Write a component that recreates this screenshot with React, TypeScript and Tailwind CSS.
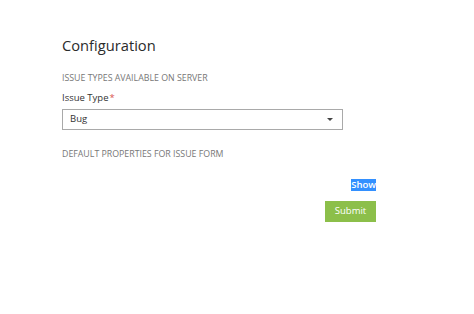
export default function App() {
  return (
    <div className="h-[314px] w-[474px] bg-white font-['Open_Sans',sans-serif]">
      <div className="w-[376px] pl-[62px] pt-[34px]">
        <h1 className="text-[14.7px] leading-[22px] text-[#2b2b2b]">Configuration</h1>
        <div className="mt-[16px] text-[8.8px] leading-[12px] text-[#777]">ISSUE TYPES AVAILABLE ON SERVER</div>
        <label className="mt-[7px] block text-[9.5px] leading-[13px] text-[#333]">
          Issue Type<span className="ml-[1px] text-[#d9534f]">*</span>
        </label>
        <div className="mt-[5px] flex h-[21px] w-[281px] items-center justify-between border border-[#a9a9a9] pl-[7px] pr-[9px]">
          <span className="text-[9.5px] text-[#333]">Bug</span>
          <span className="h-0 w-0 border-x-[3px] border-t-[3px] border-x-transparent border-t-[#444]" />
        </div>
        <div className="mt-[18px] text-[8.8px] leading-[12px] text-[#777]">DEFAULT PROPERTIES FOR ISSUE FORM</div>
        <div className="mt-[19px] flex justify-end">
          <span className="bg-[#3390ff] text-[9.5px] font-semibold leading-[12px] text-white">Show</span>
        </div>
        <div className="mt-[10px] flex justify-end">
          <button className="h-[21px] w-[51px] bg-[#8cbf4a] text-[9.5px] text-white">Submit</button>
        </div>
      </div>
    </div>
  )
}
